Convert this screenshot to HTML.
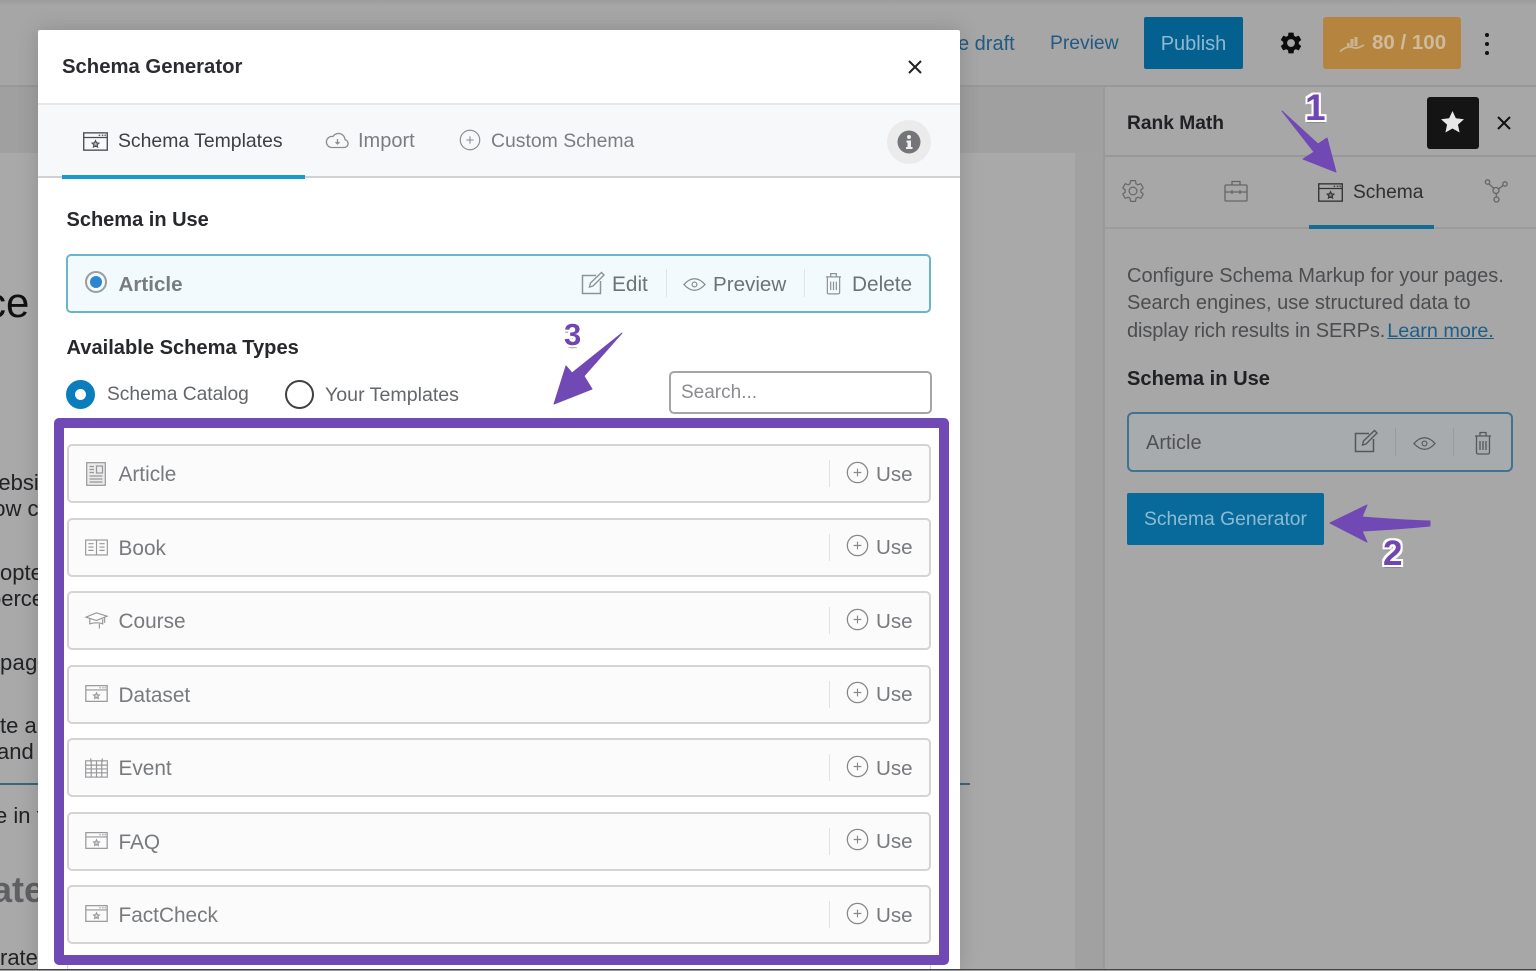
<!DOCTYPE html>
<html><head><meta charset="utf-8"><title>Schema Generator</title>
<style>
*{box-sizing:border-box}
html,body{margin:0;padding:0}
body{width:1536px;height:970px;position:relative;overflow:hidden;background:#a4a4a4;font-family:"Liberation Sans",sans-serif;color:#2b2d30}
.a{position:absolute;white-space:nowrap}
svg{position:absolute;overflow:visible}
.row{position:absolute;left:66.5px;width:864.5px;height:59px;background:#fbfbfb;border:2px solid #d3d4d6;border-radius:5px}
.row .t{position:absolute;left:50px;top:16px;font-size:20.8px;color:#777a7e;line-height:26px}
.row .u{position:absolute;left:807.5px;top:15.5px;font-size:20.6px;color:#777a7e;line-height:26px}
.row .d{position:absolute;left:760px;top:14px;height:27px;width:1px;background:#e2e2e2}
.row svg{left:16px;top:18px}
.row .p{left:777px;top:14.5px}
.num{font-weight:bold;color:#6f46b4;text-shadow:-2px 0 #fff,2px 0 #fff,0 -2px #fff,0 2px #fff,-2px -2px #fff,2px 2px #fff,-2px 2px #fff,2px -2px #fff,0 3px #8a8a8a}
</style></head><body>
<svg width="0" height="0" style="position:absolute"><defs>
<symbol id="tpl" viewBox="0 0 24 18"><rect x=".7" y=".7" width="22.6" height="16.6" fill="none" stroke="currentColor" stroke-width="1.3"/><path d="M1 5.2H23M15 3H16.5M18 3H19.5M20.6 3H22" fill="none" stroke="currentColor" stroke-width="1.2"/><path d="M12 8.2l1 2.1 2.2.3-1.6 1.5.4 2.2-2-1.1-2 1.1.4-2.2-1.6-1.5 2.2-.3z" fill="currentColor" fill-opacity=".35" stroke="currentColor" stroke-width="1.1"/></symbol>
<symbol id="plus" viewBox="0 0 24 24"><circle cx="12" cy="12" r="10.6" fill="none" stroke="currentColor" stroke-width="1.3"/><path d="M12 8v8M8 12h8" fill="none" stroke="currentColor" stroke-width="1.2"/></symbol>
<symbol id="edit" viewBox="0 0 24 24"><path d="M15 4.5H1.5V22.5H19.500V10" fill="none" stroke="currentColor" stroke-width="1.5"/><path d="M8.5 16L9.5 12 20.5 1.5 23 4 12 15z" fill="none" stroke="currentColor" stroke-width="1.4"/></symbol>
<symbol id="eye" viewBox="0 0 24 14"><path d="M1 7C5 2.500 8.500 1 12 1s7 1.500 11 6c-4 4.500-7.500 6-11 6S5 11.500 1 7z" fill="none" stroke="currentColor" stroke-width="1.300"/><circle cx="12" cy="7" r="2.500" fill="none" stroke="currentColor" stroke-width="1.200"/></symbol>
<symbol id="trash" viewBox="0 0 18 24"><path d="M1 5H17M6 5V1.500H12V5M2.500 5V21.500a1.500 1.500 0 0 0 1.500 1.500H14a1.500 1.500 0 0 0 1.500-1.500V5M6 10v9M9 10v9M12 10v9" fill="none" stroke="currentColor" stroke-width="1.300"/></symbol>
<symbol id="gear" viewBox="0 0 24 24"><path d="M19.14 12.94c.04-.3.06-.61.06-.94 0-.32-.02-.64-.07-.94l2.03-1.58c.18-.14.23-.41.12-.61l-1.92-3.32c-.12-.22-.37-.29-.59-.22l-2.39.96c-.5-.38-1.03-.7-1.62-.94l-.36-2.54c-.04-.24-.24-.41-.48-.41h-3.84c-.24 0-.43.17-.47.41l-.36 2.54c-.59.24-1.13.57-1.62.94l-2.39-.96c-.22-.08-.47 0-.59.22L2.74 8.87c-.12.21-.08.47.12.61l2.03 1.58c-.05.3-.09.63-.09.94s.02.64.07.94l-2.03 1.58c-.18.14-.23.41-.12.61l1.92 3.32c.12.22.37.29.59.22l2.39-.96c.5.38 1.03.7 1.62.94l.36 2.54c.05.24.24.41.48.41h3.84c.24 0 .44-.17.47-.41l.36-2.54c.59-.24 1.13-.56 1.62-.94l2.39.96c.22.08.47 0 .59-.22l1.92-3.32c.12-.22.07-.47-.12-.61l-2.01-1.58zM12 15.6c-1.98 0-3.6-1.62-3.6-3.6s1.62-3.6 3.6-3.6 3.6 1.62 3.6 3.6-1.62 3.6-3.6 3.6z"/></symbol>
</defs></svg>

<!-- editor background -->
<div class="a" style="left:0;top:0;width:1536px;height:87px;background:linear-gradient(#9c9c9c 0,#a6a6a6 6px);border-bottom:2px solid #989898"></div>
<div class="a" style="left:0;top:87px;width:1104px;height:66px;background:#a0a0a0"></div>
<div class="a" style="left:0;top:153px;width:1075px;height:817px;background:#a9a9a9"></div>
<div class="a" style="left:1075px;top:153px;width:29px;height:817px;background:#a1a1a1"></div>
<div class="a" style="left:1103px;top:87px;width:433px;height:883px;background:#a7a7a7;border-left:2px solid #999"></div>

<!-- left cut text -->
<div class="a" style="left:-15px;top:278px;font-size:42px;line-height:50px;color:#111">ce</div>
<div class="a" style="left:-22px;top:470px;font-size:22px;line-height:26px;color:#202225">Websi</div>
<div class="a" style="left:-19px;top:496px;font-size:22px;line-height:26px;color:#202225">how c</div>
<div class="a" style="left:0;top:560px;font-size:22px;line-height:26px;color:#202225">opted</div>
<div class="a" style="left:-11px;top:586px;font-size:22px;line-height:26px;color:#202225">perce</div>
<div class="a" style="left:0;top:650px;font-size:22px;line-height:26px;letter-spacing:.3px;color:#202225">pag</div>
<div class="a" style="left:0;top:713px;font-size:22px;line-height:26px;color:#202225">te ar</div>
<div class="a" style="left:-3px;top:739px;font-size:22px;line-height:26px;color:#202225">and</div>
<div class="a" style="left:-5px;top:803px;font-size:22px;line-height:26px;color:#202225">e in t</div>
<div class="a" style="left:-8px;top:869px;font-size:36px;line-height:42px;font-weight:bold;color:#5f6063">ate</div>
<div class="a" style="left:0;top:945px;font-size:22px;line-height:26px;color:#202225">rate</div>
<div class="a" style="left:0;top:783px;width:38px;height:2px;background:#3f6378"></div>
<div class="a" style="left:960px;top:783px;width:10px;height:2px;background:#3f6378"></div>

<!-- top bar -->
<div class="a" style="left:959px;top:32px;font-size:20px;line-height:24px;color:#215a82;text-indent:-1px">e draft</div>
<div class="a" style="left:1050px;top:32px;font-size:19.300px;line-height:24px;color:#215a82">Preview</div>
<div class="a" style="left:1144px;top:17px;width:99px;height:52px;background:#04608f;border-radius:2px;color:#8fb9d1;font-size:20px;line-height:54px;text-align:center">Publish</div>
<svg style="left:1278px;top:30px;fill:#0c0c0c" width="26" height="26"><use href="#gear" width="26" height="26"/></svg>
<div class="a" style="left:1323px;top:17px;width:138px;height:52px;background:#b5853f;border-radius:3px"></div>
<svg style="left:1340px;top:36px" width="24" height="16" viewBox="0 0 24 16"><path fill="#c9b591" d="M7 10h2.500V7H7zM10.500 10h3V3h-3zM14.500 10h3V1h-3z"/><path fill="none" stroke="#c9b591" stroke-width="1.800" d="M0 15.500C5 11 9 10 13 11.500S20 11 24 9"/></svg>
<div class="a" style="left:1372px;top:30px;font-size:20.500px;line-height:26px;font-weight:bold;color:#cdbb9c">80 / 100</div>
<div class="a" style="left:1485px;top:33px;width:4px;height:4px;border-radius:50%;background:#111"></div>
<div class="a" style="left:1485px;top:42px;width:4px;height:4px;border-radius:50%;background:#111"></div>
<div class="a" style="left:1485px;top:51px;width:4px;height:4px;border-radius:50%;background:#111"></div>

<!-- sidebar -->
<div class="a" style="left:1127px;top:110.500px;font-size:19.200px;line-height:26px;font-weight:bold;color:#202124">Rank Math</div>
<div class="a" style="left:1427px;top:97px;width:52px;height:52px;background:#141414;border-radius:3px"></div>
<svg style="left:1441px;top:111px" width="23" height="22" viewBox="0 0 24 23"><path fill="#e8e8e8" d="M12 0l3.500 7.600 8.500 1-6.300 5.600 1.700 8.300-7.400-4.200-7.400 4.200 1.700-8.300L0 8.600l8.500-1z"/></svg>
<svg style="left:1497px;top:116px" width="14" height="14" viewBox="0 0 14 14"><path d="M1 1l12 12M13 1L1 13" stroke="#111" stroke-width="2"/></svg>
<div class="a" style="left:1104px;top:155px;width:432px;height:2px;background:#989898"></div>
<div class="a" style="left:1104px;top:227px;width:432px;height:2px;background:#9b9b9b"></div>
<div class="a" style="left:1309px;top:225px;width:125px;height:4px;background:#156d93"></div>
<svg style="left:1120px;top:178px;fill:none;stroke:#666;stroke-width:1.100" width="26" height="26"><use href="#gear" width="26" height="26"/></svg>
<svg style="left:1224px;top:180px" width="24" height="22" viewBox="0 0 24 22" fill="none" stroke="#666" stroke-width="1.300"><rect x="1" y="5" width="22" height="16" rx="1"/><path d="M8 5V1.500H16V5M1 12H23M8 10v4M16 10v4"/></svg>
<svg style="left:1318px;top:183px;color:#333" width="25" height="19"><use href="#tpl" width="25" height="19"/></svg>
<div class="a" style="left:1353px;top:180px;font-size:19.200px;line-height:26px;color:#2e3033">Schema</div>
<svg style="left:1484px;top:179px" width="24" height="24" viewBox="0 0 24 24" fill="none" stroke="#666" stroke-width="1.300"><circle cx="3.500" cy="3" r="2.200"/><circle cx="21" cy="5" r="2.200"/><circle cx="12.500" cy="20.500" r="2.500"/><circle cx="12" cy="11.500" r="3"/><path d="M5 5l5 4.500M19 6.500L14.500 10M12.300 14.500V18"/></svg>

<div class="a" style="left:1127px;top:263px;font-size:20px;line-height:27.300px;color:#4b4d50;white-space:normal;width:400px">Configure Schema Markup for your pages.<br>Search engines, use structured data to<br><span style="letter-spacing:-.1px">display rich results in SERPs.</span> <span style="color:#1d5f86;text-decoration:underline;margin-left:-3.500px;font-size:19.800px">Learn more.</span></div>
<div class="a" style="left:1127px;top:366px;font-size:20.100px;line-height:26px;font-weight:bold;color:#202124">Schema in Use</div>
<div class="a" style="left:1127px;top:412px;width:386px;height:60px;background:#a8abad;border:2px solid #3f7391;border-radius:6px"></div>
<div class="a" style="left:1146px;top:429.500px;font-size:20px;line-height:26px;color:#4f5155">Article</div>
<svg style="left:1354px;top:429px;color:#55585b" width="24" height="24"><use href="#edit" width="24" height="24"/></svg>
<div class="a" style="left:1395px;top:428px;width:1px;height:28px;background:#9a9a9a"></div>
<svg style="left:1413px;top:436px;color:#55585b" width="23" height="15"><use href="#eye" width="23" height="15"/></svg>
<div class="a" style="left:1453px;top:428px;width:1px;height:28px;background:#9a9a9a"></div>
<svg style="left:1474px;top:431px;color:#55585b" width="18" height="24"><use href="#trash" width="18" height="24"/></svg>
<div class="a" style="left:1127px;top:493px;width:197px;height:52px;background:#086a9b;border-radius:2px;color:#8dbbd3;font-size:19.300px;line-height:54px;text-align:center">Schema Generator</div>

<!-- modal -->
<div class="a" style="left:38px;top:30px;width:922px;height:940px;background:#fff;border-radius:2px 2px 0 0;box-shadow:0 0 22px rgba(0,0,0,.16)">
 <div class="a" style="left:0;top:73px;width:922px;height:75px;background:#f7f8fa;border-top:2px solid #e6e7e9;border-bottom:2px solid #cfd1d4"></div>
 <div class="a" style="left:24px;top:145px;width:243px;height:4px;background:#189bcc"></div>
</div>
<div class="a" style="left:62px;top:54px;font-size:20.300px;line-height:27px;font-weight:bold;color:#2a2c30">Schema Generator</div>
<svg style="left:908px;top:60px" width="14" height="14" viewBox="0 0 14 14"><path d="M1 1l12 12M13 1L1 13" stroke="#222" stroke-width="2"/></svg>
<svg style="left:83px;top:132px;color:#4a4c50" width="25" height="19"><use href="#tpl" width="25" height="19"/></svg>
<div class="a" style="left:118px;top:128px;font-size:19.400px;line-height:26px;color:#3d4044">Schema Templates</div>
<svg style="left:326px;top:130px" width="23" height="19" viewBox="0 0 23 19" fill="none" stroke="#8c8e91" stroke-width="1.300"><path d="M5 17.500h13a4 4 0 0 0 1-7.900A6.500 6.500 0 0 0 7 6.500 5.500 5.500 0 0 0 5 17.500zM11.500 9v5M9.500 12l2 2 2-2"/></svg>
<div class="a" style="left:358px;top:128px;font-size:20px;line-height:26px;color:#7a7d81">Import</div>
<svg style="left:459px;top:129px;color:#8c8e91" width="22" height="22"><use href="#plus" width="22" height="22"/></svg>
<div class="a" style="left:491px;top:128px;font-size:19.400px;line-height:26px;color:#7a7d81">Custom Schema</div>
<div class="a" style="left:887px;top:120px;width:44px;height:44px;border-radius:50%;background:#ebebeb"></div>
<svg style="left:897px;top:129.500px" width="24" height="24" viewBox="0 0 24 24"><circle cx="12" cy="12" r="11.500" fill="#737578"/><circle cx="12" cy="7" r="2" fill="#f0f0f0"/><path d="M9.500 10.500H14V17H15.500V19H9V17H10.500V12.500H9.500z" fill="#f0f0f0"/></svg>

<div class="a" style="left:66.500px;top:207px;font-size:20px;line-height:26px;font-weight:bold;color:#26282b">Schema in Use</div>
<div class="a" style="left:66px;top:254px;width:865px;height:59px;background:#f3fafe;border:2px solid #6cb4cc;border-radius:5px"></div>
<div class="a" style="left:85px;top:271px;width:22px;height:22px;border-radius:50%;border:2px solid #9a9c9f;background:#f3fafe"></div>
<div class="a" style="left:90px;top:276px;width:12px;height:12px;border-radius:50%;background:#2d87cf"></div>
<div class="a" style="left:118.500px;top:271.500px;font-size:20.600px;line-height:26px;font-weight:bold;color:#787c80">Article</div>
<svg style="left:581px;top:271px;color:#909396" width="24" height="24"><use href="#edit" width="24" height="24"/></svg>
<div class="a" style="left:612px;top:271.500px;font-size:20.800px;line-height:26px;color:#6d7276">Edit</div>
<div class="a" style="left:666px;top:269px;width:1px;height:28px;background:#e0e4e6"></div>
<svg style="left:683px;top:277px;color:#85888b" width="23" height="15"><use href="#eye" width="23" height="15"/></svg>
<div class="a" style="left:713px;top:271.500px;font-size:20.600px;line-height:26px;color:#6d7276">Preview</div>
<div class="a" style="left:804px;top:269px;width:1px;height:28px;background:#e0e4e6"></div>
<svg style="left:825px;top:272px;color:#909396" width="17" height="23"><use href="#trash" width="17" height="23"/></svg>
<div class="a" style="left:852px;top:271.500px;font-size:20.800px;line-height:26px;color:#6d7276">Delete</div>

<div class="a" style="left:66.500px;top:335px;font-size:20.100px;line-height:26px;font-weight:bold;color:#26282b">Available Schema Types</div>
<div class="a" style="left:66px;top:380px;width:29px;height:29px;border-radius:50%;border:9px solid #0a7dbd;background:#fff"></div>
<div class="a" style="left:107px;top:382px;font-size:19.200px;line-height:26px;color:#63666a">Schema Catalog</div>
<div class="a" style="left:285px;top:380px;width:29px;height:29px;border-radius:50%;border:2px solid #3f4144;background:#fff"></div>
<div class="a" style="left:325px;top:382px;font-size:19.600px;line-height:26px;color:#63666a">Your Templates</div>
<div class="a" style="left:669px;top:371px;width:263px;height:43px;border:2px solid #a3a5a8;border-radius:5px;background:#fff;padding-left:10px;font-size:19px;line-height:40px;color:#8a8c90">Search...</div>

<div class="row" style="top:444px"><svg width="20" height="24" viewBox="0 0 20 24" fill="#ebebeb" stroke="#95979a" stroke-width="1.200" style="left:17px;top:16px"><rect x=".7" y=".7" width="18.600" height="22.600"/><path d="M3.500 4.500H8M3.500 7.500H8M3.500 10.500H8M3.500 14H16.500M3.500 17H16.500M3.500 20H16.500" fill="none"/><rect x="10.500" y="4" width="6" height="7" fill="none"/></svg><span class="t">Article</span><i class="d"></i><svg class="p" style="color:#85878a" width="23" height="23"><use href="#plus" width="23" height="23"/></svg><span class="u">Use</span></div>
<div class="row" style="top:517.500px"><svg width="23" height="17" viewBox="0 0 24 17" fill="none" stroke="#95979a" stroke-width="1.200" style="top:19px"><rect x=".7" y=".7" width="22.600" height="15.600"/><path d="M12 1V16M3.500 4.500H9M3.500 8H9M3.500 11.500H9M15 4.500H20.500M15 8H20.500M15 11.500H20.500"/></svg><span class="t">Book</span><i class="d"></i><svg class="p" style="color:#85878a" width="23" height="23"><use href="#plus" width="23" height="23"/></svg><span class="u">Use</span></div>
<div class="row" style="top:591px"><svg width="23" height="19" viewBox="0 0 24 19" fill="none" stroke="#95979a" stroke-width="1.200"><path d="M1 6L12 1.500 23 5 12 9.500zM5 8V13C9 11.500 15 11.500 18.500 13V8M20.500 6V12M15 13V18"/></svg><span class="t">Course</span><i class="d"></i><svg class="p" style="color:#85878a" width="23" height="23"><use href="#plus" width="23" height="23"/></svg><span class="u">Use</span></div>
<div class="row" style="top:664.500px"><svg style="color:#95979a" width="23" height="17"><use href="#tpl" width="23" height="17"/></svg><span class="t">Dataset</span><i class="d"></i><svg class="p" style="color:#85878a" width="23" height="23"><use href="#plus" width="23" height="23"/></svg><span class="u">Use</span></div>
<div class="row" style="top:738px"><svg width="23" height="20" viewBox="0 0 24 20" fill="none" stroke="#95979a" stroke-width="1.200"><rect x=".7" y="2.500" width="22.600" height="17"/><path d="M1 7H23M1 11H23M1 15H23M6.500 3V19.500M12 3V19.500M17.500 3V19.500M6 0V4M18 0V4"/></svg><span class="t">Event</span><i class="d"></i><svg class="p" style="color:#85878a" width="23" height="23"><use href="#plus" width="23" height="23"/></svg><span class="u">Use</span></div>
<div class="row" style="top:811.500px"><svg style="color:#95979a" width="23" height="17"><use href="#tpl" width="23" height="17"/></svg><span class="t">FAQ</span><i class="d"></i><svg class="p" style="color:#85878a" width="23" height="23"><use href="#plus" width="23" height="23"/></svg><span class="u">Use</span></div>
<div class="row" style="top:885px"><svg style="color:#95979a" width="23" height="17"><use href="#tpl" width="23" height="17"/></svg><span class="t">FactCheck</span><i class="d"></i><svg class="p" style="color:#85878a" width="23" height="23"><use href="#plus" width="23" height="23"/></svg><span class="u">Use</span></div>
<div class="a" style="left:67px;top:964px;width:1px;height:6px;background:#cfd0d2"></div>
<div class="a" style="left:930px;top:964px;width:1px;height:6px;background:#cfd0d2"></div>

<!-- annotations -->
<div class="a" style="left:54px;top:418px;width:895px;height:547px;border:10px solid #7049b5;border-radius:5px"></div>
<svg style="left:0;top:0" width="1536" height="970"><g fill="#7049b5" stroke="#7049b5" stroke-width="1" stroke-linejoin="round">
<path d="M1282 111L1318 144 1327 138 1336 172 1303 159 1314 152z"/>
<path d="M1330 523L1367 505 1362 517Q1400 520 1430 521V526Q1400 529 1362 531L1367 542z"/>
<path d="M622 333L584 376 592 389 554 404 566 366 572 373z"/>
</g></svg>
<div class="a num" style="left:1305px;top:87px;font-size:37px;line-height:42px">1</div>
<div class="a num" style="left:1383px;top:534px;font-size:35px;line-height:40px">2</div>
<div class="a num" style="left:564px;top:316px;font-size:31px;line-height:38px">3</div>
<div class="a" style="left:0;top:969px;width:1536px;height:1px;background:#444"></div>
</body></html>
